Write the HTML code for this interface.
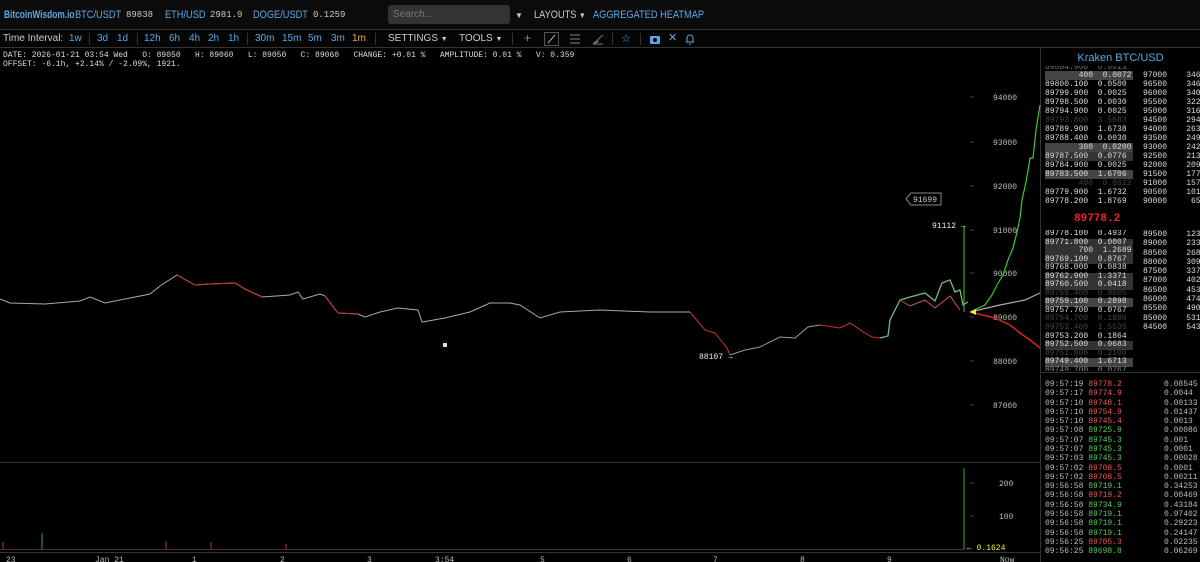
<!DOCTYPE html>
<html><head><meta charset="utf-8"><style>
*{margin:0;padding:0;box-sizing:border-box}
body{width:1200px;height:562px;background:#000;overflow:hidden;position:relative;font-family:"Liberation Sans",sans-serif;color:#ccc}
.abs{position:absolute;white-space:nowrap}
.mono{font-family:"Liberation Mono","DejaVu Sans Mono",monospace}
#top{left:0;top:0;width:1200px;height:30px;background:#0b0b0b;border-bottom:1px solid #333}
#top .abs{top:9px;font-size:11px}
#top .n{transform:scaleX(0.84);transform-origin:left center}
#top .m{font-size:9px;top:10px}
.blue{color:#5aa9e6}
#tb{left:0;top:30px;width:1200px;height:18px;border-bottom:1px solid #333;background:#050505}
#tb .abs{top:3px;font-size:10px}
.sep{position:absolute;top:3px;width:1px;height:12px;background:#333}
.ob{font-size:8px}
</style></head><body>
<div id="top" class="abs">
<span class="abs blue n" style="left:4px;font-weight:bold;transform:scaleX(0.76)">BitcoinWisdom.io</span>
<span class="abs blue n" style="left:75px">BTC/USDT</span><span class="abs mono m" style="left:126px">89838</span>
<span class="abs blue n" style="left:165px">ETH/USD</span><span class="abs mono m" style="left:210px">2981.9</span>
<span class="abs blue n" style="left:253px">DOGE/USDT</span><span class="abs mono m" style="left:313px">0.1259</span>
<div class="abs" style="left:388px;top:5px;width:122px;height:19px;background:#333;border-radius:3px;color:#777;font-size:10px;padding:4px 5px">Search...</div>
<span class="abs" style="left:515px;font-size:8px;top:11px">▼</span>
<span class="abs n" style="left:534px">LAYOUTS <span style="font-size:8px">▼</span></span>
<span class="abs blue n" style="left:593px">AGGREGATED HEATMAP</span>
</div>
<div id="tb" class="abs">
<span class="abs" style="left:3px">Time Interval:</span>
<span class="abs blue" style="left:69px">1w</span><div class="sep" style="left:89px"></div>
<span class="abs blue" style="left:97px">3d</span><span class="abs blue" style="left:117px">1d</span><div class="sep" style="left:137px"></div>
<span class="abs blue" style="left:144px">12h</span><span class="abs blue" style="left:169px">6h</span><span class="abs blue" style="left:189px">4h</span><span class="abs blue" style="left:208px">2h</span><span class="abs blue" style="left:228px">1h</span><div class="sep" style="left:247px"></div>
<span class="abs blue" style="left:255px">30m</span><span class="abs blue" style="left:282px">15m</span><span class="abs blue" style="left:308px">5m</span><span class="abs blue" style="left:331px">3m</span><span class="abs" style="left:352px;color:#f5a623">1m</span><div class="sep" style="left:375px"></div>
<span class="abs" style="left:388px">SETTINGS <span style="font-size:7px">▼</span></span>
<span class="abs" style="left:459px">TOOLS <span style="font-size:7px">▼</span></span>
<div class="sep" style="left:512px"></div>
<span class="abs" style="left:524px;color:#888;font-size:12px;top:1px">+</span>
<div class="abs" style="left:544px;top:2px;width:15px;height:14px;border:1px solid #555"></div>
<svg class="abs" style="left:544px;top:2px" width="15" height="14"><line x1="4" y1="11" x2="11" y2="3" stroke="#aaa"/></svg>
<svg class="abs" style="left:569px;top:3px" width="12" height="12"><path d="M1 2h10M1 6h10M1 10h10" stroke="#888"/></svg>
<svg class="abs" style="left:592px;top:3px" width="12" height="12"><path d="M1 11L11 2M1 11l6-3M1 11h10" stroke="#777" fill="none"/></svg>
<div class="sep" style="left:612px"></div>
<span class="abs blue" style="left:621px;font-size:11px;top:2px">☆</span>
<div class="sep" style="left:640px"></div>
<svg class="abs" style="left:649px;top:3px" width="12" height="12"><rect x="1" y="3" width="10" height="8" rx="1" fill="#5aa9e6"/><circle cx="6" cy="7" r="2" fill="#000"/></svg>
<span class="abs blue" style="left:668px;font-size:11px;top:1px">✕</span>
<svg class="abs" style="left:685px;top:3px" width="10" height="12"><path d="M2 9V5a3 3 0 0 1 6 0v4H1h8M4 11h2" stroke="#5aa9e6" fill="none"/></svg>
</div>
<div class="abs mono" style="left:3px;top:51px;font-size:8px;line-height:9px;color:#ddd">DATE: 2026-01-21 03:54 Wed &nbsp; O: 89050 &nbsp; H: 89060 &nbsp; L: 89050 &nbsp; C: 89060 &nbsp; CHANGE: +0.01 % &nbsp; AMPLITUDE: 0.01 % &nbsp; V: 0.359<br>OFFSET: -6.1h, +2.14% / -2.09%, 1921.</div>

<svg class="abs" style="left:0;top:0" width="1200" height="562">
<line x1="1040.5" y1="48" x2="1040.5" y2="562" stroke="#333"/>
<line x1="0" y1="462.5" x2="1040" y2="462.5" stroke="#333"/>
<line x1="0" y1="552.5" x2="1040" y2="552.5" stroke="#333"/>
<line x1="1041" y1="372.5" x2="1200" y2="372.5" stroke="#333"/>
<g stroke="#444"><line x1="970" y1="97" x2="974" y2="97"/><line x1="970" y1="142" x2="974" y2="142"/><line x1="970" y1="186" x2="974" y2="186"/><line x1="970" y1="230" x2="974" y2="230"/><line x1="970" y1="273" x2="974" y2="273"/><line x1="970" y1="317" x2="974" y2="317"/><line x1="970" y1="361" x2="974" y2="361"/><line x1="970" y1="405" x2="974" y2="405"/><line x1="970" y1="483" x2="974" y2="483"/><line x1="970" y1="516" x2="974" y2="516"/></g>
<g font-family="Liberation Mono,monospace" font-size="8" fill="#bbb">
<text x="993" y="100">94000</text><text x="993" y="145">93000</text><text x="993" y="189">92000</text><text x="993" y="233">91000</text><text x="993" y="276">90000</text><text x="993" y="320">89000</text><text x="993" y="364">88000</text><text x="993" y="408">87000</text>
<text x="999" y="486">200</text><text x="999" y="519">100</text>
<text x="932" y="228" fill="#eee">91112 →</text><text x="699" y="359" fill="#eee">88107 →</text>
<text x="967" y="550" fill="#ee4">← 0.1624</text>
<text x="6" y="562">23</text><text x="95" y="562">Jan 21</text><text x="192" y="562">1</text><text x="280" y="562">2</text><text x="367" y="562">3</text><text x="435" y="562">3:54</text><text x="540" y="562">5</text><text x="627" y="562">6</text><text x="713" y="562">7</text><text x="800" y="562">8</text><text x="887" y="562">9</text><text x="1000" y="562">Now</text>
</g>
<path d="M906 199l5-6h30v12h-30z" fill="#000" stroke="#888"/>
<text x="913" y="202" font-family="Liberation Mono,monospace" font-size="8" fill="#ccc">91699</text>
<polyline fill="none" stroke="#aaa" stroke-width="1" points="0,299 10,303 45,304 80,301 90,297 105,303 130,298 150,294 160,286 177,275 195,285 210,284 235,283 245,289 262,297 290,295 298,292 303,299 320,294 325,296 338,313 358,314 365,317 380,312 398,308 418,310 422,322 445,318 470,312 490,303 510,303 520,305 540,318 560,312 600,310 650,312 690,312"/>
<polyline fill="none" stroke="#c33" stroke-width="1" points="177,275 195,285 210,284 235,283 245,289 262,297"/>
<polyline fill="none" stroke="#c33" stroke-width="1" points="325,296 338,313 358,314"/>
<polyline fill="none" stroke="#c33" stroke-width="1" points="690,312 705,330 715,333 727,348 730,355"/>
<polyline fill="none" stroke="#8a8" stroke-width="1" points="730,355 745,350 760,347 780,337 795,338 808,327 820,325"/>
<polyline fill="none" stroke="#c33" stroke-width="1" points="820,325 840,328 850,323 865,333 872,337 880,338"/>
<polyline fill="none" stroke="#7b7" stroke-width="1.3" points="880,338 888,336 890,320 900,300 910,297 925,293 935,301 942,283 950,280 955,292 960,290 963,305 968,302"/>
<polyline fill="none" stroke="#c55" stroke-width="1" points="900,300 910,306 925,300 935,308 950,296 960,310"/>
<line x1="964" y1="226" x2="964" y2="312" stroke="#3c3"/>
<polyline fill="none" stroke="#3c3" stroke-width="1.2" points="970,312 985,305 992,295 997,285 1003,275 1008,260 1013,248 1017,232 1020,218 1022,200 1026,182 1029,165 1030,158 1033,158 1036,130 1040,105"/>
<polyline fill="none" stroke="#aaa" stroke-width="1.2" points="970,312 1000,305 1025,300 1040,293"/>
<polyline fill="none" stroke="#d22" stroke-width="1.5" points="970,312 995,318 1010,325 1020,333 1030,340 1040,348"/>
<polygon points="970,312 976,309 976,315" fill="#ee4"/>
<rect x="443" y="343" width="4" height="4" fill="#ddd"/>
<g stroke="#3a3"><line x1="964" y1="468" x2="964" y2="550"/><line x1="42" y1="533" x2="42" y2="550"/></g>
<g stroke="#a33"><line x1="3" y1="542" x2="3" y2="550"/><line x1="166" y1="541" x2="166" y2="550"/><line x1="211" y1="542" x2="211" y2="550"/><line x1="286" y1="544" x2="286" y2="550"/></g>
<line x1="0" y1="549.5" x2="964" y2="549.5" stroke="#433"/>
</svg>

<div class="abs" style="left:1041px;top:52px;width:159px;text-align:center;color:#5aa9e6;font-size:11px">Kraken BTC/USD</div>
<div class="abs mono ob" style="left:1045px;top:66px;width:88px;color:#ddd;line-height:9px">
<div style="color:#777;height:5px;overflow:hidden;line-height:3px">89804.900&nbsp;&nbsp;0.0013</div>
<div style="background:#444">&nbsp;&nbsp;&nbsp;&nbsp;&nbsp;&nbsp;&nbsp;400&nbsp;&nbsp;0.0072</div>
<div>89800.100&nbsp;&nbsp;0.0500</div><div>89799.900&nbsp;&nbsp;0.0025</div><div>89798.500&nbsp;&nbsp;0.0030</div><div>89794.900&nbsp;&nbsp;0.0025</div>
<div style="color:#444">89793.800&nbsp;&nbsp;3.5683</div>
<div>89789.900&nbsp;&nbsp;1.6738</div><div>89788.400&nbsp;&nbsp;0.0030</div>
<div style="background:#444">&nbsp;&nbsp;&nbsp;&nbsp;&nbsp;&nbsp;&nbsp;300&nbsp;&nbsp;0.0200</div>
<div style="background:#333">89787.500&nbsp;&nbsp;0.0776</div>
<div>89784.900&nbsp;&nbsp;0.0025</div>
<div style="background:#444">89783.500&nbsp;&nbsp;1.6706</div>
<div style="color:#444">&nbsp;&nbsp;&nbsp;&nbsp;&nbsp;&nbsp;&nbsp;400&nbsp;&nbsp;0.0022</div>
<div>89779.900&nbsp;&nbsp;1.6732</div><div>89778.200&nbsp;&nbsp;1.8769</div>
</div>
<div class="abs mono" style="left:1074px;top:213px;color:#e22;font-size:11px;font-weight:bold">89778.2</div>
<div class="abs mono ob" style="left:1045px;top:230px;width:88px;height:141px;overflow:hidden;color:#ddd;line-height:8.55px">
<div>89778.100&nbsp;&nbsp;0.4937</div>
<div style="background:#333">89771.800&nbsp;&nbsp;0.0007</div>
<div style="background:#333">&nbsp;&nbsp;&nbsp;&nbsp;&nbsp;&nbsp;&nbsp;700&nbsp;&nbsp;1.2689</div>
<div style="background:#333">89769.100&nbsp;&nbsp;0.8767</div>
<div>89768.000&nbsp;&nbsp;0.0838</div>
<div style="background:#333">89762.900&nbsp;&nbsp;1.3371</div>
<div style="background:#333">89760.500&nbsp;&nbsp;0.0418</div>
<div style="color:#444">89760.400&nbsp;&nbsp;0.0005</div>
<div style="background:#444">89759.100&nbsp;&nbsp;0.2898</div>
<div>89757.700&nbsp;&nbsp;0.0767</div>
<div style="color:#444">89754.700&nbsp;&nbsp;0.1880</div>
<div style="color:#444">89753.400&nbsp;&nbsp;1.5535</div>
<div>89753.200&nbsp;&nbsp;0.1864</div>
<div style="background:#333">89752.500&nbsp;&nbsp;0.0683</div>
<div style="color:#444">89751.600&nbsp;&nbsp;0.2100</div>
<div style="background:#444">89749.400&nbsp;&nbsp;1.6713</div>
<div style="color:#888">89749.700&nbsp;&nbsp;0.0767</div>
</div>
<div class="abs mono ob" style="left:1143px;top:71px;color:#ddd;line-height:9px">
<div>97000&nbsp;&nbsp;&nbsp;&nbsp;346</div><div>96500&nbsp;&nbsp;&nbsp;&nbsp;346</div><div>96000&nbsp;&nbsp;&nbsp;&nbsp;340</div><div>95500&nbsp;&nbsp;&nbsp;&nbsp;322</div><div>95000&nbsp;&nbsp;&nbsp;&nbsp;316</div><div>94500&nbsp;&nbsp;&nbsp;&nbsp;294</div><div>94000&nbsp;&nbsp;&nbsp;&nbsp;263</div><div>93500&nbsp;&nbsp;&nbsp;&nbsp;249</div><div>93000&nbsp;&nbsp;&nbsp;&nbsp;242</div><div>92500&nbsp;&nbsp;&nbsp;&nbsp;213</div><div>92000&nbsp;&nbsp;&nbsp;&nbsp;209</div><div>91500&nbsp;&nbsp;&nbsp;&nbsp;177</div><div>91000&nbsp;&nbsp;&nbsp;&nbsp;157</div><div>90500&nbsp;&nbsp;&nbsp;&nbsp;101</div><div>90000&nbsp;&nbsp;&nbsp;&nbsp;&nbsp;65</div>
</div>
<div class="abs mono ob" style="left:1143px;top:230px;color:#ddd;line-height:9.3px">
<div>89500&nbsp;&nbsp;&nbsp;&nbsp;123</div><div>89000&nbsp;&nbsp;&nbsp;&nbsp;233</div><div>88500&nbsp;&nbsp;&nbsp;&nbsp;268</div><div>88000&nbsp;&nbsp;&nbsp;&nbsp;309</div><div>87500&nbsp;&nbsp;&nbsp;&nbsp;337</div><div>87000&nbsp;&nbsp;&nbsp;&nbsp;402</div><div>86500&nbsp;&nbsp;&nbsp;&nbsp;453</div><div>86000&nbsp;&nbsp;&nbsp;&nbsp;474</div><div>85500&nbsp;&nbsp;&nbsp;&nbsp;490</div><div>85000&nbsp;&nbsp;&nbsp;&nbsp;531</div><div>84500&nbsp;&nbsp;&nbsp;&nbsp;543</div>
</div>
<div class="abs mono ob" style="left:1045px;top:380px;color:#bbb;line-height:9.28px">
<div>09:57:19 <span style="color:#e55">89778.2</span></div><div>09:57:17 <span style="color:#e55">89774.9</span></div><div>09:57:10 <span style="color:#e55">89748.1</span></div><div>09:57:10 <span style="color:#e55">89754.9</span></div><div>09:57:10 <span style="color:#e55">89745.4</span></div><div>09:57:08 <span style="color:#5c5">89725.9</span></div><div>09:57:07 <span style="color:#5c5">89745.3</span></div><div>09:57:07 <span style="color:#5c5">89745.3</span></div><div>09:57:03 <span style="color:#5c5">89745.3</span></div><div>09:57:02 <span style="color:#e55">89708.5</span></div><div>09:57:02 <span style="color:#e55">89708.5</span></div><div>09:56:58 <span style="color:#5c5">89719.1</span></div><div>09:56:58 <span style="color:#e55">89719.2</span></div><div>09:56:58 <span style="color:#5c5">89734.9</span></div><div>09:56:58 <span style="color:#5c5">89719.1</span></div><div>09:56:58 <span style="color:#5c5">89719.1</span></div><div>09:56:58 <span style="color:#5c5">89719.1</span></div><div>09:56:25 <span style="color:#e55">89705.3</span></div><div>09:56:25 <span style="color:#5c5">89698.8</span></div>
</div>
<div class="abs mono ob" style="left:1164px;top:380px;color:#bbb;line-height:9.28px">
<div>0.08545</div><div>0.0044</div><div>0.00133</div><div>0.01437</div><div>0.0013</div><div>0.00086</div><div>0.001</div><div>0.0001</div><div>0.00028</div><div>0.0001</div><div>0.00211</div><div>0.34253</div><div>0.00469</div><div>0.43184</div><div>0.97402</div><div>0.29223</div><div>0.24147</div><div>0.02235</div><div>0.06269</div>
</div>
</body></html>
